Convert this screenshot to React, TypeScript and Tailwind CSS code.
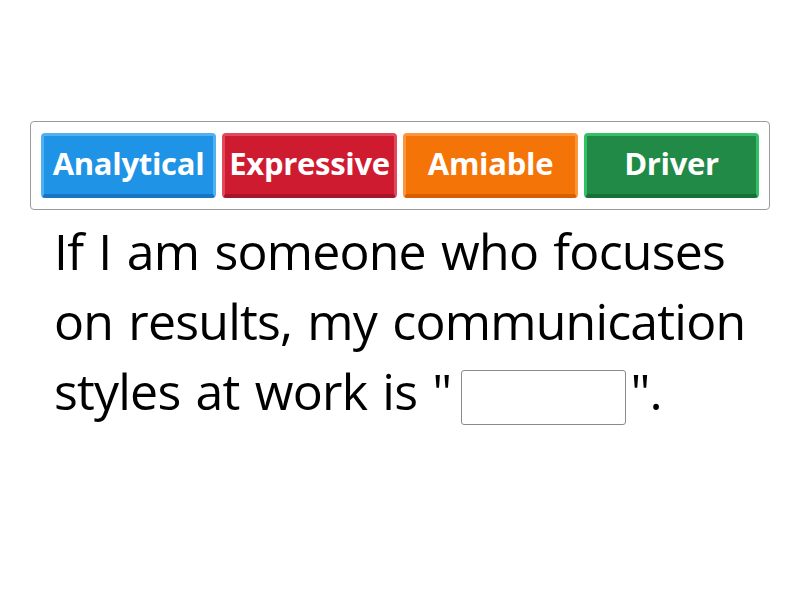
const tiles = [
  { label: 'Analytical', cls: 'bg-[#1f93e6] border-[#52b0f0] border-b-[#1577c4]' },
  { label: 'Expressive', cls: 'bg-[#cf1b30] border-[#e04a5a] border-b-[#a8142a]' },
  { label: 'Amiable', cls: 'bg-[#f57407] border-[#fb963a] border-b-[#d75f00]' },
  { label: 'Driver', cls: 'bg-[#208a46] border-[#33c066] border-b-[#17703a]' },
]

export default function App() {
  return (
    <div className="w-[800px] h-[600px] bg-white font-['Open_Sans',sans-serif] pt-[121px] px-[30px]">
      <div className="w-[740px] h-[89px] border border-[#9a9a9a] rounded-[4px] px-[10px] pt-[11px] flex gap-[6px]">
        {tiles.map((t) => (
          <div
            key={t.label}
            className={`w-[175px] h-[65px] rounded-[4px] border-[3px] border-b-[4px] flex items-center justify-center text-white font-bold text-[31px] tracking-[-0.3px] pb-[4px] ${t.cls}`}
          >
            {t.label}
          </div>
        ))}
      </div>
      <div className="pl-[24px] pt-[6px] text-[50px] leading-[70px] tracking-[-0.8px] [word-spacing:3px] text-black w-[740px]">
        <p>If I am someone who focuses</p>
        <p>on results, my communication</p>
        <p className="flex items-center">
          <span>styles at work is "</span>
          <span className="inline-block w-[165px] h-[55px] border border-[#8a8a8a] rounded-[3px] ml-[10px] mr-[4px] mt-[12px]" />
          <span>".</span>
        </p>
      </div>
    </div>
  )
}
